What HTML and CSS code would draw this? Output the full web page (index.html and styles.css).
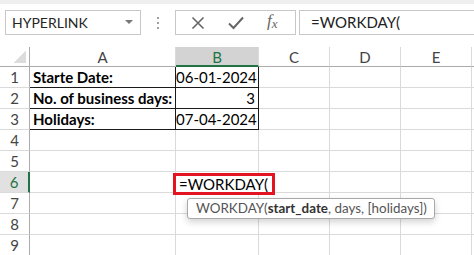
FILE: index.html
```html
<!DOCTYPE html>
<html lang="en">
<head>
    <meta charset="UTF-8">
    <title>WORKDAY</title>
    <link rel="stylesheet" href="styles.css">
</head>
<body>
    <div class="app">
        <!-- formula bar -->
        <div class="toolbar">
            <div class="namebox">
                <span>HYPERLINK</span>
                <svg class="caret" width="8" height="5" viewBox="0 0 8 5"><path d="M0 0h8L4 4z" fill="#777"/></svg>
            </div>
            <div class="grip"><i></i><i></i><i></i></div>
            <div class="fx-buttons">
                <svg width="14" height="14" viewBox="0 0 14 14"><path d="M1.5 1.5l11 11M12.5 1.5l-11 11" stroke="#666" stroke-width="1.6" fill="none"/></svg>
                <svg width="16" height="14" viewBox="0 0 16 14"><path d="M1 7.5l4.5 4.5L15 1.5" stroke="#666" stroke-width="2" fill="none"/></svg>
                <span class="fx">f<sub>x</sub></span>
            </div>
            <div class="formula-input">=WORKDAY(</div>
        </div>

        <div class="sheet">
            <div class="grid" id="grid"></div>
            <div class="edit-cell">=WORKDAY(</div>
            <div class="tip">WORKDAY(<b>start_date</b>, days, [holidays])</div>
        </div>
    </div>

    <script>
        const grid = document.getElementById('grid');
        const cols = ['A', 'B', 'C', 'D', 'E', ''];
        const data = {
            1: ['Starte Date:', '06-01-2024'],
            2: ['No. of business days:', '3'],
            3: ['Holidays:', '07-04-2024']
        };

        function cell(cls, text) {
            const d = document.createElement('div');
            d.className = cls;
            if (text) d.textContent = text;
            grid.appendChild(d);
        }

        // header row
        cell('corner', '');
        cols.forEach(c => cell(c === 'B' ? 'col-head active' : 'col-head', c));

        // rows
        for (let r = 1; r <= 9; r++) {
            cell(r === 6 ? 'row-head active' : 'row-head', String(r));
            cols.forEach((c, i) => {
                let cls = 'cell';
                let text = '';
                if (data[r] && i < 2) {
                    cls += i === 0 ? ' label boxed' : ' value boxed';
                    text = data[r][i];
                }
                cell(cls, text);
            });
        }
    </script>
</body>
</html>
```

FILE: styles.css
```css
body {
    margin: 0;
    background: #ffffff;
    font-family: Lato, "Open Sans", sans-serif;
    overflow: hidden;
}

.app {
    width: 474px;
    height: 255px;
    overflow: hidden;
}

.toolbar {
    height: 47px;
    box-sizing: border-box;
    border-top: 4px solid #efefef;
    padding-top: 6px;
    display: flex;
    align-items: flex-start;
}

.namebox {
    margin-left: 5px;
    width: 136px;
    height: 25px;
    box-sizing: border-box;
    border: 1px solid #c8c8c8;
    display: flex;
    align-items: center;
    justify-content: space-between;
    padding: 0 7px 0 6px;
    font-size: 14px;
    color: #262626;
}

.grip {
    width: 34px;
    height: 25px;
    display: flex;
    flex-direction: column;
    align-items: center;
    justify-content: center;
    gap: 3px;
}

.grip i {
    width: 2px;
    height: 2px;
    background: #a0a0a0;
}

.fx-buttons {
    width: 121px;
    height: 25px;
    box-sizing: border-box;
    border: 1px solid #c8c8c8;
    display: flex;
    align-items: center;
    justify-content: space-around;
    padding: 0 6px 0 4px;
}

.fx {
    font-family: "Liberation Serif", serif;
    font-style: italic;
    font-size: 17px;
    color: #666;
    margin-top: -3px;
}

.fx sub {
    font-size: 13px;
    vertical-align: -2px;
}

.formula-input {
    margin-left: 3px;
    flex: 1;
    height: 25px;
    box-sizing: border-box;
    border: 1px solid #c8c8c8;
    border-right: none;
    padding-left: 11px;
    font-size: 15px;
    line-height: 23px;
    color: #222;
}

.sheet {
    position: relative;
}

.grid {
    display: grid;
    grid-template-columns: 30px 146px 83px 71px 71px 71px 20px;
    grid-template-rows: 20px repeat(9, 21px);
}

.grid > div {
    box-sizing: border-box;
    border-right: 1px solid #dadada;
    border-bottom: 1px solid #dadada;
    font-size: 15px;
    line-height: 20px;
    white-space: nowrap;
    overflow: hidden;
}

.corner {
    background: linear-gradient(135deg, transparent 55%, #dcdcdc 55%) no-repeat right 3px bottom 3px / 14px 14px;
    border-bottom-color: #ababab !important;
    border-right-color: #ababab !important;
}

.col-head {
    text-align: center;
    color: #444;
    border-bottom-color: #ababab !important;
}

.col-head.active {
    background: #d3d3d3;
    color: #217346;
    border-bottom: 2px solid #217346 !important;
}

.row-head {
    text-align: center;
    color: #444;
    border-right-color: #ababab !important;
}

.row-head.active {
    background: #e1e1e1;
    color: #217346;
    border-right: 2px solid #217346 !important;
}

.cell.boxed {
    border-right: 1px solid #1a1a1a;
    border-bottom: 1px solid #1a1a1a;
    color: #000;
}

.label {
    font-weight: bold;
    padding-left: 3px;
}

.value {
    text-align: right;
    padding-right: 3px;
}

.edit-cell {
    position: absolute;
    left: 173px;
    top: 126px;
    width: 102px;
    height: 22px;
    box-sizing: border-box;
    border: 3px solid #e3141f;
    padding-left: 3px;
    font-size: 15px;
    line-height: 16px;
    color: #000;
    background: #fff;
    white-space: nowrap;
    overflow: hidden;
}

.tip {
    position: absolute;
    left: 187px;
    top: 151px;
    width: 248px;
    height: 21px;
    box-sizing: border-box;
    border: 1px solid #a9a9a9;
    border-radius: 3px;
    background: #fff;
    box-shadow: 0 3px 7px rgba(0, 0, 0, 0.18);
    padding-left: 8px;
    font-size: 13.4px;
    line-height: 19px;
    color: #555;
    white-space: nowrap;
}

.tip b {
    color: #333;
}
```
